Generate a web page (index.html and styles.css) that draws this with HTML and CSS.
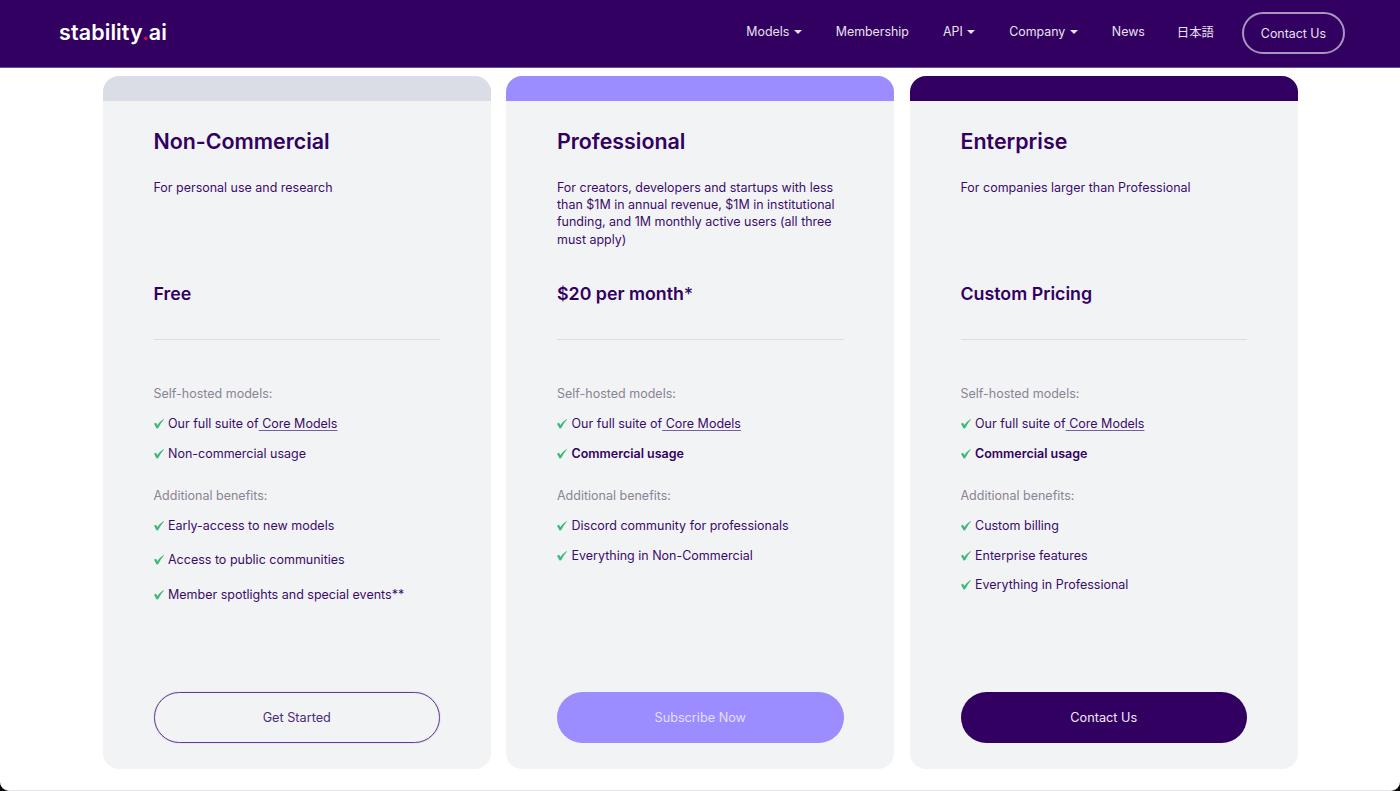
FILE: index.html
```html
<!DOCTYPE html>
<html lang="en">
<head>
  <meta charset="UTF-8" />
  <title>Stability AI Membership</title>
  <link rel="stylesheet" href="styles.css">
</head>
<body>
  <svg class="icon-defs" xmlns="http://www.w3.org/2000/svg">
    <symbol id="tick" viewBox="0 0 10 10">
      <path d="M0 4.7 L2 3.7 L3.4 5.9 Q5.6 2.6 9.7 0 L10 .4 Q6.6 3.9 4.1 9.2 L2.6 9.4 Z"/>
    </symbol>
  </svg>
  <div class="page">
    <header class="topbar">
      <a class="logo" href="#">stability<span class="logo-dot">.</span>ai</a>
      <nav class="nav">
        <a href="#">Models <span class="caret"></span></a>
        <a href="#">Membership</a>
        <a href="#">API <span class="caret"></span></a>
        <a href="#">Company <span class="caret"></span></a>
        <a href="#">News</a>
        <a href="#" class="nav-jp">日本語</a>
        <a href="#" class="nav-contact">Contact Us</a>
      </nav>
    </header>

    <main class="plans">
      <section class="plan plan-free">
        <div class="plan-band"></div>
        <div class="plan-body">
          <h2>Non-Commercial</h2>
          <p class="plan-desc">For personal use and research</p>
          <h3 class="plan-price">Free</h3>
          <hr class="plan-rule">
          <p class="list-head">Self-hosted models:</p>
          <ul class="ticks">
            <li><svg class="tick"><use href="#tick"/></svg>Our full suite of<a href="#"> Core Models </a></li>
            <li><svg class="tick"><use href="#tick"/></svg>Non-commercial usage</li>
          </ul>
          <p class="list-head list-head-second">Additional benefits:</p>
          <ul class="ticks ticks-wide">
            <li><svg class="tick"><use href="#tick"/></svg>Early-access to new models</li>
            <li><svg class="tick"><use href="#tick"/></svg>Access to public communities</li>
            <li><svg class="tick"><use href="#tick"/></svg>Member spotlights and special events**</li>
          </ul>
          <a href="#" class="plan-btn">Get Started</a>
        </div>
      </section>

      <section class="plan plan-pro">
        <div class="plan-band"></div>
        <div class="plan-body">
          <h2>Professional</h2>
          <p class="plan-desc">For creators, developers and startups with less than $1M in annual revenue, $1M in institutional funding, and 1M monthly active users (all three must apply)</p>
          <h3 class="plan-price">$20 per month<span class="price-star">*</span></h3>
          <hr class="plan-rule">
          <p class="list-head">Self-hosted models:</p>
          <ul class="ticks">
            <li><svg class="tick"><use href="#tick"/></svg>Our full suite of<a href="#"> Core Models </a></li>
            <li><svg class="tick"><use href="#tick"/></svg><b>Commercial usage</b></li>
          </ul>
          <p class="list-head list-head-second">Additional benefits:</p>
          <ul class="ticks">
            <li><svg class="tick"><use href="#tick"/></svg>Discord community for professionals</li>
            <li><svg class="tick"><use href="#tick"/></svg>Everything in Non-Commercial</li>
          </ul>
          <a href="#" class="plan-btn">Subscribe Now</a>
        </div>
      </section>

      <section class="plan plan-ent">
        <div class="plan-band"></div>
        <div class="plan-body">
          <h2>Enterprise</h2>
          <p class="plan-desc">For companies larger than Professional</p>
          <h3 class="plan-price">Custom Pricing</h3>
          <hr class="plan-rule">
          <p class="list-head">Self-hosted models:</p>
          <ul class="ticks">
            <li><svg class="tick"><use href="#tick"/></svg>Our full suite of<a href="#"> Core Models </a></li>
            <li><svg class="tick"><use href="#tick"/></svg><b>Commercial usage</b></li>
          </ul>
          <p class="list-head list-head-second">Additional benefits:</p>
          <ul class="ticks">
            <li><svg class="tick"><use href="#tick"/></svg>Custom billing</li>
            <li><svg class="tick"><use href="#tick"/></svg>Enterprise features</li>
            <li><svg class="tick"><use href="#tick"/></svg>Everything in Professional</li>
          </ul>
          <a href="#" class="plan-btn">Contact Us</a>
        </div>
      </section>
    </main>
  </div>
</body>
</html>
```

FILE: styles.css
```css
html, body {
  margin: 0;
  padding: 0;
  height: 100%;
  background: #000;
  font-family: Inter, "Noto Sans CJK JP", sans-serif;
  color: #320061;
}
.icon-defs {
  display: none;
}
.page {
  height: 790px;
  background: #fff;
  border-radius: 0 0 9px 9px;
  overflow: hidden;
  border-bottom: 1px solid #e4e4e8;
}
.topbar {
  height: 67px;
  background: #320061;
  border-bottom: 1px solid #6c4b97;
  display: flex;
  align-items: center;
  justify-content: space-between;
  padding: 0 55px 0 59px;
}
.logo {
  font-family: Inter, sans-serif;
  font-size: 21.5px;
  font-weight: 600;
  color: #fff;
  text-decoration: none;
  letter-spacing: 0.1px;
  margin-bottom: 4px;
}
.logo-dot {
  color: #e80a32;
}
.nav {
  display: flex;
  align-items: center;
  gap: 34px;
  font-size: 12.4px;
}
.nav a {
  color: #e8e2f0;
  text-decoration: none;
  margin-bottom: 4px;
}
.nav .nav-jp {
  margin-left: -2px;
}
.caret {
  display: inline-block;
  width: 0;
  height: 0;
  margin-left: 1px;
  vertical-align: 2px;
  border-left: 4px solid transparent;
  border-right: 4px solid transparent;
  border-top: 4px solid #e8e2f0;
}
.nav .nav-contact {
  margin: 0 0 2px -6px;
  box-sizing: border-box;
  width: 103px;
  height: 42px;
  padding-top: 2px;
  border: 2px solid #a896c0;
  border-radius: 21px;
  display: flex;
  align-items: center;
  justify-content: center;
}
.plans {
  display: grid;
  grid-template-columns: repeat(3, 388px);
  gap: 15.5px;
  justify-content: center;
  padding-top: 8px;
}
.plan {
  height: 693px;
  border-radius: 16px;
  background: #f2f3f5;
  overflow: hidden;
  display: flex;
  flex-direction: column;
}
.plan-band {
  height: 25px;
  flex: none;
}
.plan-free .plan-band { background: #dadde6; }
.plan-pro .plan-band { background: #9b8cff; }
.plan-ent .plan-band { background: #320061; }
.plan-body {
  flex: 1;
  padding: 0 50.5px 26px 51px;
  display: flex;
  flex-direction: column;
}
h2 {
  margin: 27px 0 0;
  font-size: 21.4px;
  line-height: 27px;
  font-weight: 600;
}
.plan-desc {
  margin: 23.5px 0 0;
  height: 70px;
  font-size: 12.47px;
  line-height: 17.4px;
  color: #3a0c69;
}
.plan-price {
  margin: 34.5px 0 0;
  font-size: 17.8px;
  line-height: 22px;
  font-weight: 600;
}
.price-star {
  font-weight: 400;
}
.plan-rule {
  margin: 33.5px 0 0;
  width: 100%;
  border: 0;
  border-top: 1px solid #dcdde2;
}
.list-head {
  margin: 45px 0 0;
  font-size: 12.5px;
  line-height: 17.5px;
  color: #8a8494;
}
.list-head-second {
  margin-top: 25px;
}
.ticks {
  list-style: none;
  margin: 0;
  padding: 0;
  font-size: 12.5px;
  line-height: 17px;
  color: #3a0c69;
}
.ticks li {
  margin-top: 12.8px;
}
.ticks-wide li {
  margin-top: 17.4px;
}
.ticks-wide li:first-child {
  margin-top: 12.8px;
}
.tick {
  width: 10px;
  height: 10px;
  margin-right: 4.5px;
  vertical-align: -1px;
  fill: #3fb87a;
}
.ticks a {
  color: inherit;
  text-decoration: underline;
  text-underline-offset: 2px;
  text-decoration-color: #7a5ba5;
  padding-right: 1.5px;
}
.ticks b {
  font-weight: 600;
  color: #320061;
}
.plan-btn {
  margin-top: auto;
  height: 51px;
  box-sizing: border-box;
  border-radius: 26px;
  display: flex;
  align-items: center;
  justify-content: center;
  font-size: 12.7px;
  font-weight: 400;
  text-decoration: none;
}
.plan-free .plan-btn {
  border: 1px solid #5f3d90;
  box-shadow: 0 0 1px #8a70b0;
  color: #4b2a78;
}
.plan-pro .plan-btn {
  background: #9b8cff;
  color: #e3dfff;
}
.plan-ent .plan-btn {
  background: #320061;
  color: #f0ecf5;
}
```
